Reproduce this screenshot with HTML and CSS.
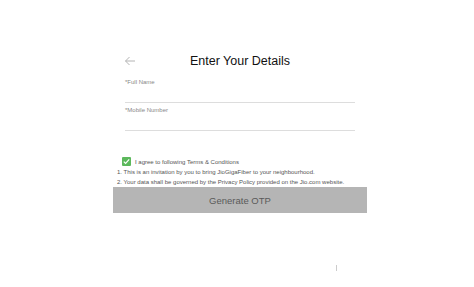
FILE: index.html
```html
<!DOCTYPE html>
<html>
<head>
    <title>Enter Your Details</title>
    <link rel="stylesheet" href="styles.css">
</head>
<body>
<div class="panel">
    <div class="header">
        <svg class="back" width="12" height="10" viewBox="0 0 12 10">
            <path d="M11 5H1.5M5.5 1L1.5 5l4 4" fill="none" stroke="#b4b4b4" stroke-width="1"/>
        </svg>
        <h1>Enter Your Details</h1>
    </div>
    <div class="field first">
        <label>*Full Name</label>
        <div class="line"></div>
    </div>
    <div class="field">
        <label>*Mobile Number</label>
        <div class="line"></div>
    </div>
    <div class="agree">
        <span class="check">
            <svg width="9" height="9" viewBox="0 0 9 9">
                <path d="M1.8 4.6l1.8 1.8 3.6-4" fill="none" stroke="#fff" stroke-width="1.2"/>
            </svg>
        </span>
        <span>I agree to following Terms &amp; Conditions</span>
    </div>
    <ol class="terms">
        <li>1. This is an invitation by you to bring JioGigaFiber to your neighbourhood.</li>
        <li>2. Your data shall be governed by the Privacy Policy provided on the Jio.com website.</li>
    </ol>
    <button class="otp">Generate OTP</button>
</div>
<div class="mark"></div>
</body>
</html>
```

FILE: styles.css
```css
body {
    margin: 0;
    background: #fff;
    font-family: "Liberation Sans", Arial, sans-serif;
    color: #333;
}
.panel {
    width: 254px;
    margin-left: 113px;
    padding-top: 53px;
}
.header {
    display: flex;
    align-items: center;
    height: 16px;
    padding-left: 11px;
}
.back {
    display: block;
}
h1 {
    flex: 1;
    margin: 0 0 0 -23px;
    font-size: 12.5px;
    font-weight: normal;
    text-align: center;
    color: #111;
}
.field {
    padding: 0 12px;
}
.field.first {
    margin-top: 9px;
}
label {
    display: block;
    font-size: 6px;
    color: #888;
    line-height: 8px;
}
.line {
    height: 1px;
    background: #ddd;
    margin-top: 16px;
    margin-bottom: 3px;
}
.agree {
    display: flex;
    align-items: center;
    gap: 4px;
    margin-top: 26px;
    padding-left: 9px;
    font-size: 6px;
    color: #555;
}
.check {
    display: flex;
    width: 9px;
    height: 9px;
    background: #5cb85c;
    border-radius: 1px;
}
.terms {
    list-style: none;
    margin: 1px 0 0;
    padding-left: 4px;
    font-size: 6px;
    line-height: 10px;
    color: #555;
}
.otp {
    display: block;
    width: 100%;
    height: 26px;
    margin-top: 0;
    border: none;
    background: #b5b5b5;
    color: #5a5a5a;
    font-family: "Liberation Sans", Arial, sans-serif;
    font-size: 9.5px;
}
.mark {
    width: 1px;
    height: 6px;
    background: #ccc;
    margin: 52px 0 0 336px;
}
```
